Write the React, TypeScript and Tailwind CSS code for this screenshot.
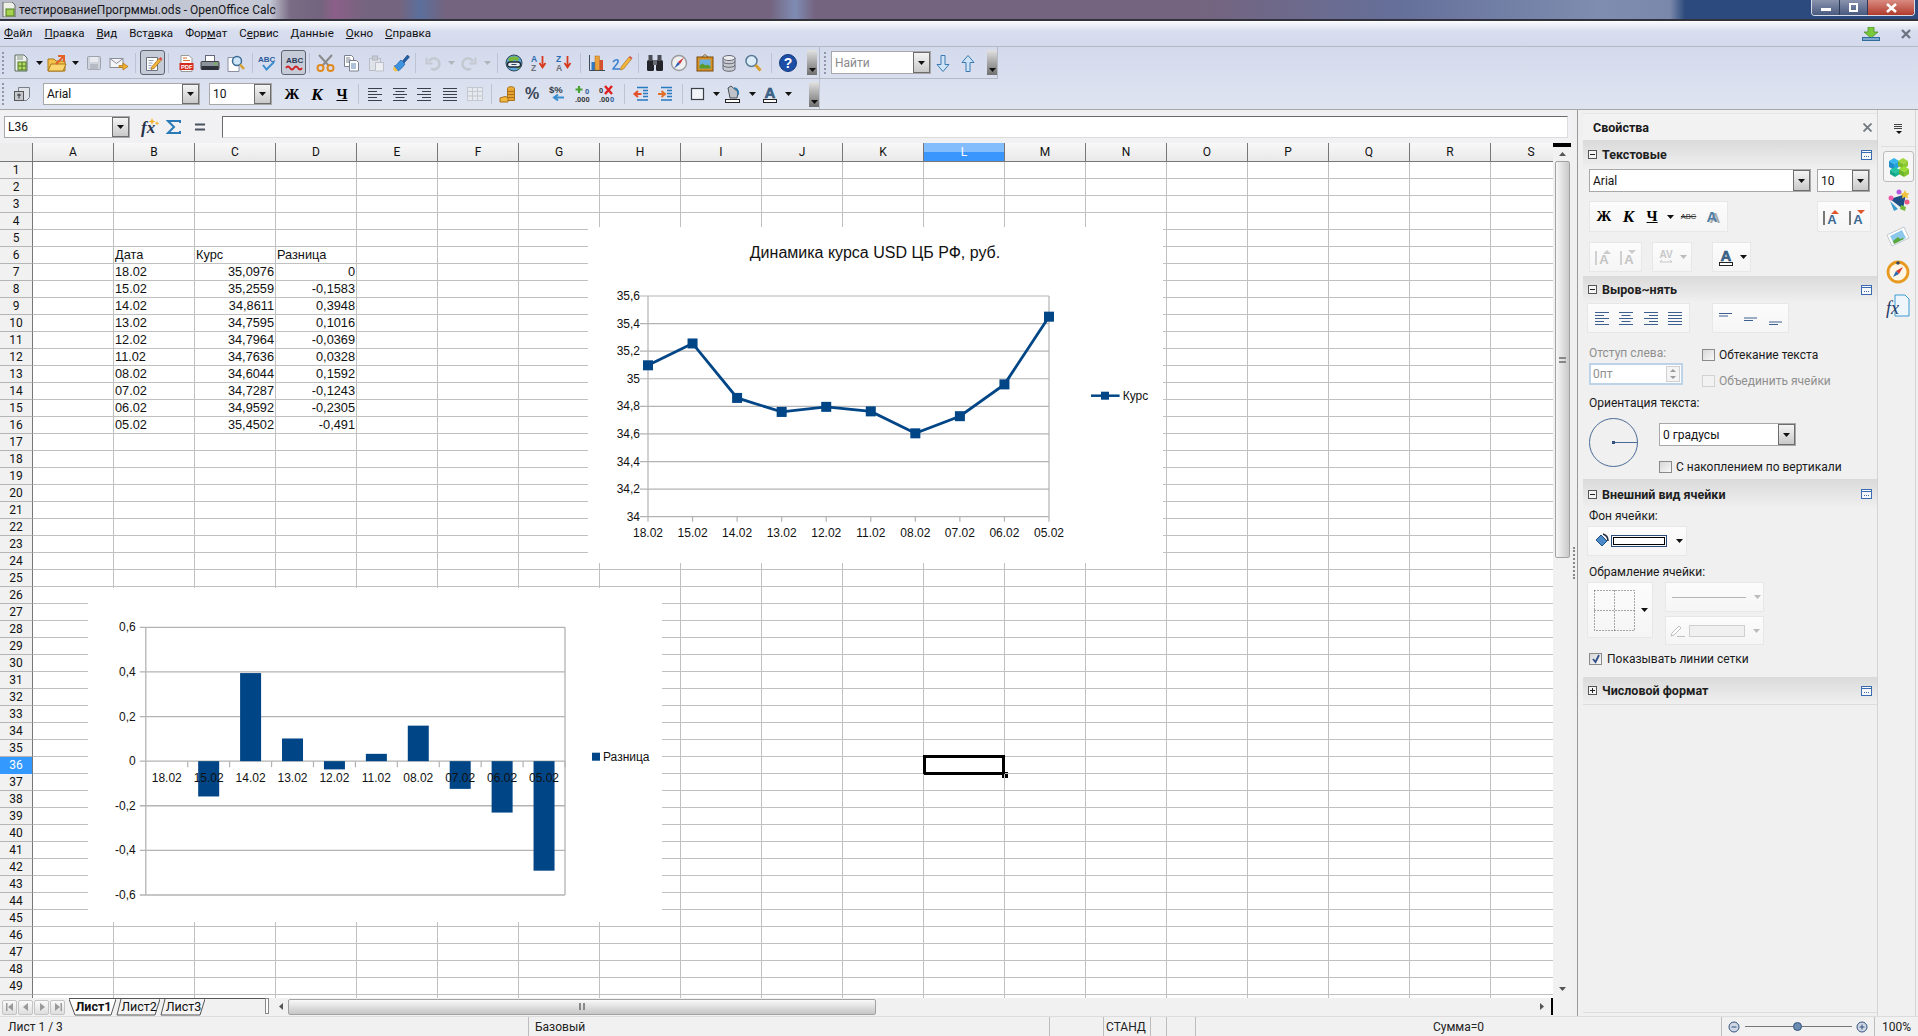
import React from "react";

const UI = "[font-family:'Roboto',sans-serif]";
const ARIAL = "[font-family:'Liberation_Sans',sans-serif]";
const SERIF = "[font-family:'Liberation_Serif',serif]";

const Svg = ({ w = 18, h = 18, children }: { w?: number; h?: number; children: React.ReactNode }) => (
  <svg width={w} height={h} viewBox={`0 0 ${w} ${h}`} className="shrink-0 overflow-visible">
    {children}
  </svg>
);

const Tri = ({ c = "#111" }: { c?: string }) => (
  <svg width="7" height="4" viewBox="0 0 7 4" className="shrink-0">
    <path d="M0 0h7L3.5 4z" fill={c} />
  </svg>
);

const Lines = ({ k, c = "#3a3f48" }: { k: "l" | "c" | "r" | "j"; c?: string }) => {
  const d = [2.5, 5.5, 8.5, 11.5, 14.5]
    .map((y, i) => {
      const short = i % 2 === 1;
      const len = k === "j" || !short ? 14 : 9;
      const x = k === "l" || k === "j" ? 2 : k === "c" ? 9 - len / 2 : 16 - len;
      return `M${x} ${y}h${len}`;
    })
    .join("");
  return (
    <Svg h={17}>
      <path d={d} stroke={c} strokeWidth="1" fill="none" />
    </Svg>
  );
};

const I: Record<string, React.ReactNode> = {
  doc: (
    <Svg>
      <path d="M3 1h9l3 3v13H3z" fill="#eef0f2" stroke="#5a6a5a" />
      <path d="M5 3h6M5 5h6" stroke="#8a9a80" />
      <rect x="6" y="8" width="8" height="8" fill="#b6d96a" stroke="#4d7a1e" />
      <path d="M10 8v8M6 12h8" stroke="#4d7a1e" />
    </Svg>
  ),
  folder: (
    <Svg w={20}>
      <path d="M1 17V5h6l2 2h9v10z" fill="#f4c24a" stroke="#a9781a" />
      <path d="M1 17l3-7h15l-3 7z" fill="#fbd66f" stroke="#a9781a" />
      <path d="M9 10l7-7M11 2h6v6" stroke="#e2622a" strokeWidth="2" fill="none" />
    </Svg>
  ),
  save: (
    <Svg>
      <rect x="2.500" y="2.500" width="13" height="13" rx="1" fill="#cfd3db" stroke="#9ea3ad" />
      <rect x="5" y="3" width="8" height="5" fill="#e8eaef" />
      <rect x="5" y="10" width="8" height="5.500" fill="#b6bac4" />
    </Svg>
  ),
  mail: (
    <Svg w={20}>
      <rect x="1" y="4.500" width="13" height="9" fill="#f4f5f8" stroke="#8a8e96" />
      <path d="M1 4.500l6.500 5 6.500-5" fill="none" stroke="#8a8e96" />
      <path d="M10 11.500h4V9l5 3.500L14 16v-2.500h-4z" fill="#f0b030" stroke="#b07010" strokeWidth=".7" />
    </Svg>
  ),
  edit: (
    <Svg>
      <path d="M2.500 3.500h11v13h-11z" fill="#fff" stroke="#6a7280" />
      <path d="M4.500 6.500h5M4.500 9h4M4.500 11.500h3M4.500 14h6" stroke="#8ea0b8" />
      <path d="M8 12.500l7-8 2 2-7 8-3 1z" fill="#f2b43a" stroke="#a06a18" strokeWidth=".7" />
      <path d="M15 4.500l1.500-1.500 2 2-1.500 1.500z" fill="#d94a4a" />
    </Svg>
  ),
  pdf: (
    <Svg>
      <path d="M4 1.500h8l3 3v13H4z" fill="#fff" stroke="#999" />
      <path d="M6 4h4M6 6.500h7" stroke="#e07030" />
      <rect x="2.500" y="9" width="14" height="7" fill="#d42a1f" />
      <text x="4" y="14.800" fontSize="5.800" fontWeight="700" fill="#fff" className={ARIAL}>PDF</text>
    </Svg>
  ),
  print: (
    <Svg w={20}>
      <rect x="5.500" y="1.500" width="9" height="7" fill="#fff" stroke="#667" />
      <rect x="1" y="7.500" width="18" height="8" rx="1" fill="#8c939c" stroke="#444" />
      <rect x="1.500" y="12" width="17" height="4" fill="#2e3238" />
      <rect x="14" y="9" width="3" height="1.500" fill="#6cc040" />
    </Svg>
  ),
  preview: (
    <Svg>
      <path d="M2 3.500h11v14H2z" fill="#fff" stroke="#8a90a0" />
      <circle cx="11" cy="7" r="4.500" fill="#cfe6f8" stroke="#3a6a96" strokeWidth="1.500" />
      <path d="M14 10.500l4 4.500" stroke="#d8a030" strokeWidth="2.500" />
    </Svg>
  ),
  spell: (
    <Svg>
      <text x="0" y="8" fontSize="8" fontWeight="700" fill="#2a5a9a" className={ARIAL}>ABC</text>
      <path d="M5 11l3.500 4.500L16 8" stroke="#3a8ed0" strokeWidth="2" fill="none" />
    </Svg>
  ),
  autospell: (
    <Svg>
      <text x="1" y="9" fontSize="8" fontWeight="700" fill="#2c3a55" className={ARIAL}>ABC</text>
      <path d="M1 14q2-3 4 0t4 0 4 0 4 0" stroke="#d02020" strokeWidth="1.800" fill="none" />
    </Svg>
  ),
  scissors: (
    <Svg w={20}>
      <path d="M3 1l10 11M16 1L6 12" stroke="#8a8a8a" strokeWidth="2" />
      <circle cx="4.500" cy="14" r="3" stroke="#e08a20" strokeWidth="2" fill="none" />
      <circle cx="14.500" cy="14" r="3" stroke="#e08a20" strokeWidth="2" fill="none" />
    </Svg>
  ),
  copy: (
    <Svg>
      <path d="M2.500 1.500h7l2 2v9h-9z" fill="#fff" stroke="#7a8290" />
      <path d="M4 4h4M4 6h5M4 8h5" stroke="#7a8290" />
      <path d="M7.500 6.500h7l2 2v8.500h-9z" fill="#fff" stroke="#7a8290" />
      <path d="M9 10h5M9 12h5M9 14h5" stroke="#5a86b8" />
    </Svg>
  ),
  paste: (
    <Svg>
      <rect x="2.500" y="4.500" width="11" height="12" fill="#dfe2e8" stroke="#b8bcc4" />
      <rect x="5.500" y="2" width="5" height="4" fill="#c8ccd4" stroke="#b0b4bc" />
      <path d="M8.500 8.500h8v8.500h-8z" fill="#eceef2" stroke="#bcc0c8" />
    </Svg>
  ),
  brush: (
    <Svg>
      <path d="M10.500 7l5-6 2 2-5.500 6z" fill="#1f5fa8" stroke="#153f70" strokeWidth=".6" />
      <path d="M2 12c3 0 4-4 7-6l4 4c-2 3-5 6-7 7z" fill="#3d93de" stroke="#1f5fa8" strokeWidth=".7" />
      <path d="M2 12l4 5-3 .500-2-2z" fill="#f4c24a" />
    </Svg>
  ),
  undo: (
    <Svg>
      <path d="M5 7.500a5.500 5.500 0 1 1 2 7" stroke="#c4c8d0" strokeWidth="2.500" fill="none" />
      <path d="M2.500 3.500v6h6" stroke="#c4c8d0" strokeWidth="2" fill="none" />
    </Svg>
  ),
  redo: (
    <Svg>
      <path d="M13 7.500a5.500 5.500 0 1 0-2 7" stroke="#c4c8d0" strokeWidth="2.500" fill="none" />
      <path d="M15.500 3.500v6h-6" stroke="#c4c8d0" strokeWidth="2" fill="none" />
    </Svg>
  ),
  nav: (
    <Svg>
      <circle cx="9" cy="9" r="8" fill="#5aa6d8" stroke="#33475a" />
      <path d="M3 5c3-3 8-3 11-1l-1 3-4-1-2 2-3-1zM12 10l4 0-1 4-3 1z" fill="#7ab83a" />
      <rect x="2.500" y="8" width="13" height="5" rx="2.500" fill="#e8eef4" stroke="#1f2a38" strokeWidth="1.300" />
      <path d="M6.500 10.500h5" stroke="#33475a" strokeWidth="1" />
    </Svg>
  ),
  az: (
    <Svg>
      <text x="1" y="8" fontSize="8.500" fontWeight="700" fill="#2a6ab0" className={ARIAL}>A</text>
      <text x="1" y="16.500" fontSize="8.500" fontWeight="700" fill="#6a7078" className={ARIAL}>Z</text>
      <path d="M12.500 2v10M9.500 9l3 4.500 3-4.500" stroke="#d83a20" strokeWidth="1.800" fill="none" />
    </Svg>
  ),
  za: (
    <Svg>
      <text x="1" y="8" fontSize="8.500" fontWeight="700" fill="#2a6ab0" className={ARIAL}>Z</text>
      <text x="1" y="16.500" fontSize="8.500" fontWeight="700" fill="#6a7078" className={ARIAL}>A</text>
      <path d="M12.500 2v10M9.500 9l3 4.500 3-4.500" stroke="#d83a20" strokeWidth="1.800" fill="none" />
    </Svg>
  ),
  chart: (
    <Svg>
      <path d="M1.500 1v15.500H17" stroke="#3a4a5a" fill="none" />
      <rect x="3.500" y="8" width="3.500" height="8" fill="#2f78c4" />
      <rect x="7" y="2" width="4.500" height="14" fill="#eca23c" stroke="#b06a10" strokeWidth=".5" />
      <rect x="11.500" y="6" width="3.500" height="10" fill="#d4502c" />
    </Svg>
  ),
  draw: (
    <Svg w={20}>
      <path d="M1 8c2-3 6-3 5 0s-5 6-5 7h7" stroke="#3a80d0" strokeWidth="1.600" fill="none" />
      <path d="M9 13l8-10 2.500 2-8 10-3 1z" fill="#f2b43a" stroke="#a06a18" strokeWidth=".6" />
      <path d="M17 3l1-1 2.500 2-1 1z" fill="#d94a4a" />
    </Svg>
  ),
  binoc: (
    <Svg>
      <rect x="1" y="6" width="7" height="11" rx="1.500" fill="#23252a" />
      <rect x="10" y="6" width="7" height="11" rx="1.500" fill="#23252a" />
      <rect x="2.500" y="1" width="4" height="6" fill="#4a4d54" />
      <rect x="11.500" y="1" width="4" height="6" fill="#4a4d54" />
      <rect x="7" y="6" width="4" height="5" fill="#6a6d74" />
    </Svg>
  ),
  compass: (
    <Svg>
      <circle cx="9" cy="9" r="7.500" fill="#eef0f2" stroke="#9a9a9a" strokeWidth="1.400" />
      <path d="M14 3.500L8 8l2 2z" fill="#d03030" />
      <path d="M4 14.500L8 8l2 2z" fill="#2a5ab0" />
    </Svg>
  ),
  pic: (
    <Svg>
      <path d="M6 3l3-2.500L12 3" stroke="#8a6a30" fill="none" />
      <rect x="1" y="3" width="16" height="14" fill="#d89020" stroke="#7a4a10" />
      <rect x="3.500" y="5.500" width="11" height="9" fill="#6cb0e0" />
      <path d="M3.500 14.500v-3l3-2 3 2 2-1 3 2v2z" fill="#5a9a2a" />
    </Svg>
  ),
  db: (
    <Svg>
      <path d="M3 4v11c0 3 12 3 12 0V4z" fill="#c8ccd0" stroke="#667" />
      <path d="M3 7.500c0 3 12 3 12 0M3 11c0 3 12 3 12 0" stroke="#667" fill="none" />
      <ellipse cx="9" cy="4" rx="6" ry="2.500" fill="#eceef0" stroke="#667" />
    </Svg>
  ),
  zoom: (
    <Svg>
      <circle cx="7.500" cy="7" r="5.500" fill="#dcecf8" stroke="#5a7a96" strokeWidth="1.500" />
      <path d="M11.500 11l5 5.500" stroke="#d8a030" strokeWidth="3" />
    </Svg>
  ),
  help: (
    <Svg>
      <circle cx="9" cy="9" r="8.500" fill="#1c4ea6" stroke="#123a80" />
      <text x="9" y="14" textAnchor="middle" fontSize="14" fontWeight="700" fill="#fff" className={ARIAL}>?</text>
    </Svg>
  ),
  down: (
    <Svg w={16}>
      <path d="M6 1.500h4v9h4l-6 7-6-7h4z" fill="#cfe4f6" stroke="#3a7ab0" />
    </Svg>
  ),
  up: (
    <Svg w={16}>
      <path d="M6 17.500h4v-9h4l-6-7-6 7h4z" fill="#cfe4f6" stroke="#3a7ab0" />
    </Svg>
  ),
  styles: (
    <Svg>
      <path d="M5.500 2.500h11v10l-3 3h-8z" fill="#dfe2e8" stroke="#7a8088" />
      <rect x="1.500" y="6.500" width="9" height="9" fill="#c4c8ce" stroke="#555" />
      <path d="M6 8.500v5M4 10h4" stroke="#333" />
    </Svg>
  ),
  merge: (
    <Svg>
      <rect x="1.500" y="2.500" width="15" height="13" fill="#e6e9ee" stroke="#c4c8d0" />
      <path d="M1.500 6.500h15M1.500 11h15M6.500 2.500v13M11.500 2.500v13" stroke="#c4c8d0" />
    </Svg>
  ),
  money: (
    <Svg>
      <ellipse cx="12" cy="3.500" rx="3.500" ry="1.800" fill="#f2b93e" stroke="#a8701a" />
      <path d="M8.500 3.500v12h7v-12" fill="#e8a22e" stroke="#a8701a" />
      <path d="M8.500 6.500h7M8.500 9.500h7M8.500 12.500h7" stroke="#a8701a" />
      <path d="M1 13l5-1.500 3 1v4.500H1z" fill="#f2b93e" stroke="#a8701a" />
    </Svg>
  ),
  pct: <span className={`${ARIAL} text-[16px] font-bold text-[#3a4656]`}>%</span>,
  curr: (
    <Svg>
      <text x="0" y="8" fontSize="9.500" fontWeight="700" fill="#333c48" className={ARIAL}>$%</text>
      <path d="M15 12.500H6M9 9.500l-4 3 4 3" stroke="#3a8ed0" strokeWidth="2" fill="none" />
    </Svg>
  ),
  addDec: (
    <Svg>
      <path d="M5 1v7M1.500 4.500h7" stroke="#4aa030" strokeWidth="2.200" />
      <text x="11" y="8.500" fontSize="7.500" fontWeight="700" fill="#2a5a9a" className={ARIAL}>0</text>
      <text x="1" y="16.500" fontSize="7.500" fontWeight="700" fill="#333" className={ARIAL}>.000</text>
    </Svg>
  ),
  delDec: (
    <Svg>
      <text x="1" y="8" fontSize="7.500" fontWeight="700" fill="#333" className={ARIAL}>0</text>
      <path d="M7 1l7 8M14 1l-7 8" stroke="#e02020" strokeWidth="2.400" />
      <text x="1" y="16.500" fontSize="7.500" fontWeight="700" fill="#333" className={ARIAL}>.00</text>
      <text x="12" y="16.500" fontSize="7.500" fontWeight="700" fill="#2a5a9a" className={ARIAL}>0</text>
    </Svg>
  ),
  indL: (
    <Svg>
      <path d="M8.500 9H2M5 6L1.500 9 5 12" stroke="#e2502a" strokeWidth="2" fill="none" />
      <path d="M4 2.500h11M10 5.500h5M10 8.500h5M10 11.500h5M4 15h11" stroke="#2a7ac0" strokeWidth="1.400" />
    </Svg>
  ),
  indR: (
    <Svg>
      <path d="M1 9h6.500M4.500 6L8 9l-3.500 3" stroke="#e2702a" strokeWidth="2" fill="none" />
      <path d="M4 2.500h11M10 5.500h5M10 8.500h5M10 11.500h5M4 15h11" stroke="#2a7ac0" strokeWidth="1.400" />
    </Svg>
  ),
  border: (
    <Svg>
      <rect x="2.500" y="3.500" width="12" height="11" fill="#f2f4f8" stroke="#3a4048" strokeWidth="1.200" />
    </Svg>
  ),
  fill: (
    <Svg>
      <path d="M4 3l3-2 7 6-1 6H6z" fill="#c0c4ca" stroke="#4a5058" />
      <path d="M10 3c3 0 5 3 4 7" stroke="#2a7ab0" strokeWidth="1.600" fill="none" />
      <rect x="1.500" y="14.500" width="14" height="3" fill="#fff" stroke="#222" />
    </Svg>
  ),
  fontColor: (
    <Svg>
      <text x="9" y="13" textAnchor="middle" fontSize="15" fontWeight="700" fill="#3d6a94" stroke="#22405e" strokeWidth=".5" className={ARIAL}>A</text>
      <rect x="2.500" y="14.500" width="13" height="3" fill="#fff" stroke="#222" />
    </Svg>
  ),
};

const Sep = ({ w }: { w: number }) => (
  <div className="flex justify-center items-center h-[24px] shrink-0" style={{ width: w }}>
    <div className="w-px h-[20px] bg-[#bcc3d4]" />
  </div>
);

const Btn = ({ w, children }: { w: number; children: React.ReactNode }) => (
  <div className="flex justify-center items-center h-[24px] shrink-0" style={{ width: w }}>
    {children}
  </div>
);

const Toggled = ({ children }: { children: React.ReactNode }) => (
  <div className="flex justify-center items-center w-[25px] h-[25px] shrink-0 rounded-[3px] border border-[#5d6470] bg-[#c6cbd8]">
    {children}
  </div>
);

const Grip = () => (
  <div className="w-[8px] shrink-0 flex justify-start pl-[2px]">
    <div className="h-[22px] border-l-2 border-dotted border-[#8f97a8]" />
  </div>
);

const Overflow = () => (
  <div className="flex items-end justify-center w-[10px] h-[25px] shrink-0 pb-[3px] bg-linear-to-b from-[#e2e2e2] to-[#707070]">
    <Tri />
  </div>
);

const ComboBtn = () => (
  <div className="flex items-center justify-center w-[17px] h-full shrink-0 border border-[#6d6d6d] bg-linear-to-b from-[#f4f4f4] to-[#c9c9c9]">
    <Tri />
  </div>
);

const Combo = ({ w, h = 23, text, grey, bc = "border-[#a8a8a8]" }: { w: number; h?: number; text: string; grey?: boolean; bc?: string }) => (
  <div className={`flex items-stretch shrink-0 border ${bc} bg-white`} style={{ width: w, height: h }}>
    <div className={`flex-1 pl-[3px] text-[12px] leading-none flex items-center ${grey ? "text-[#8a8a8a]" : "text-[#111]"}`}>{text}</div>
    <ComboBtn />
  </div>
);

const MENU: [string, string, string][] = [
  ["", "Ф", "айл"],
  ["", "П", "равка"],
  ["", "В", "ид"],
  ["Вст", "а", "вка"],
  ["Фор", "м", "ат"],
  ["С", "е", "рвис"],
  ["", "Д", "анные"],
  ["", "О", "кно"],
  ["", "С", "правка"],
];

function TitleBar() {
  return (
    <div className="flex items-center h-[19px] shrink-0 bg-[linear-gradient(90deg,#b9bdcb_0px,#c6cad6_240px,#c3c6d3_270px,#7a6c85_290px,#74647f_320px,#8c5f88_335px,#74647f_365px,#74647f_400px,#5a6f9c_420px,#74647f_445px,#74647f_770px,#7f8cb4_795px,#74647f_815px,#74647f_1200px,#65709a_1400px,#7f8db0_1600px,#7a88ab_1670px,#2c4a7d_1685px,#2c4a7d_1918px)]">
      <div className="flex items-center justify-center w-[17px]">
        <svg width="14" height="15" viewBox="0 0 14 15">
          <path d="M1 0h9l3 3v12H1z" fill="#eef0e8" stroke="#666" />
          <rect x="4" y="7" width="8" height="7" fill="#a6d050" stroke="#4a7a1a" />
        </svg>
      </div>
      <span className="pl-[2px] text-[12px] text-[#16161a] whitespace-nowrap leading-none">тестированиеПрогрммы.ods - OpenOffice Calc</span>
      <div className="ml-auto mr-[3px] flex h-[16px] self-start rounded-b-[4px] border border-t-0 border-[#d8dce8] overflow-hidden">
        <div className="w-[28px] flex items-center justify-center bg-linear-to-b from-[#8a93ad] to-[#4a5a80] border-r border-[#2c3a5a]">
          <div className="w-[10px] h-[3px] mt-[4px] bg-white" />
        </div>
        <div className="w-[28px] flex items-center justify-center bg-linear-to-b from-[#8a93ad] to-[#4a5a80] border-r border-[#2c3a5a]">
          <div className="w-[9px] h-[9px] border-2 border-white" />
        </div>
        <div className="w-[46px] flex items-center justify-center bg-linear-to-b from-[#d98a80] to-[#b03a2c]">
          <svg width="13" height="10" viewBox="0 0 13 10"><path d="M2 1l9 8M11 1L2 9" stroke="#fff" strokeWidth="2.600" /></svg>
        </div>
      </div>
    </div>
  );
}

function MenuBar() {
  return (
    <div className="flex items-center h-[28px] shrink-0 pl-[4px] border-t-2 border-[#32323c] border-b border-b-[#b4b9c6] bg-linear-to-b from-[#fbfcfd] via-[#d8deee] via-40% to-[#d3daec]">
      <div className="flex gap-[12px] text-[11.500px] text-[#111] leading-none">
        {MENU.map(([a, b, c], i) => (
          <span key={i} className="whitespace-nowrap">
            {a}
            <span className="underline">{b}</span>
            {c}
          </span>
        ))}
      </div>
      <div className="ml-auto flex items-center">
        <svg width="18" height="14" viewBox="0 0 18 14" className="mr-[21px]">
          <path d="M6 0h6v5h4l-7 6-7-6h4z" fill="#7ac83c" stroke="#3f8a1c" strokeWidth=".7" />
          <rect x="0.500" y="10.500" width="17" height="3" fill="#7aa8d0" stroke="#2f6a9a" />
        </svg>
        <svg width="10" height="10" viewBox="0 0 10 10" className="mr-[7px]">
          <path d="M1 1l8 8M9 1L1 9" stroke="#6a7280" strokeWidth="2.200" />
        </svg>
      </div>
    </div>
  );
}

function Toolbars() {
  return (
    <div className="flex flex-col shrink-0 h-[62px] bg-linear-to-b from-[#d3daec] to-[#dfe4f1]">
      <div className="flex h-[32px] items-center">
        <div className="flex items-center w-[820px] h-full border-b border-[#b4b9c6] border-r">
          <Grip />
          <Btn w={26}>{I.doc}</Btn>
          <Btn w={10}><Tri /></Btn>
          <Btn w={26}>{I.folder}</Btn>
          <Btn w={10}><Tri /></Btn>
          <Btn w={28}>{I.save}</Btn>
          <Btn w={22}>{I.mail}</Btn>
          <Sep w={10} />
          <Toggled>{I.edit}</Toggled>
          <Sep w={6} />
          <Btn w={30}>{I.pdf}</Btn>
          <Btn w={18}>{I.print}</Btn>
          <Btn w={32}>{I.preview}</Btn>
          <Sep w={2} />
          <Btn w={28}>{I.spell}</Btn>
          <Toggled>{I.autospell}</Toggled>
          <Sep w={6} />
          <Btn w={28}>{I.scissors}</Btn>
          <Btn w={22}>{I.copy}</Btn>
          <Btn w={28}>{I.paste}</Btn>
          <Btn w={22}>{I.brush}</Btn>
          <Sep w={6} />
          <Btn w={30}>{I.undo}</Btn>
          <Btn w={6}><Tri c="#b0b4bc" /></Btn>
          <Btn w={30}>{I.redo}</Btn>
          <Btn w={6}><Tri c="#b0b4bc" /></Btn>
          <Sep w={14} />
          <Btn w={20}>{I.nav}</Btn>
          <Btn w={30}>{I.az}</Btn>
          <Btn w={20}>{I.za}</Btn>
          <Sep w={12} />
          <Btn w={22}>{I.chart}</Btn>
          <Btn w={28}>{I.draw}</Btn>
          <Sep w={4} />
          <Btn w={30}>{I.binoc}</Btn>
          <Btn w={18}>{I.compass}</Btn>
          <Btn w={34}>{I.pic}</Btn>
          <Btn w={14}>{I.db}</Btn>
          <Btn w={34}>{I.zoom}</Btn>
          <Sep w={2} />
          <Btn w={32}>{I.help}</Btn>
          <div className="w-[3px]" />
          <Overflow />
        </div>
        <div className="flex items-center w-[178px] h-full pl-[2px] border-b border-r border-[#b4b9c6]">
          <Grip />
          <div className="w-px" />
          <Combo w={100} text="Найти" grey />
          <Btn w={24}>{I.down}</Btn>
          <Btn w={26}>{I.up}</Btn>
          <div className="w-[7px]" />
          <Overflow />
        </div>
      </div>
      <div className="flex h-[30px] items-center">
        <div className="flex items-center w-[820px] h-full border-r border-[#c0c5d2]">
          <Grip />
          <Btn w={28}>{I.styles}</Btn>
          <div className="w-[7px]" />
          <Combo w={157} h={22} text="Arial" />
          <div className="w-[9px]" />
          <Combo w={63} h={22} text="10" />
          <div className="w-[7.5px]" />
          <Btn w={25}><span className={`${SERIF} font-bold text-[15px] text-black leading-none`}>Ж</span></Btn>
          <Btn w={25}><span className={`${SERIF} font-bold italic text-[17px] text-black leading-none`}>К</span></Btn>
          <Btn w={25}><span className={`${SERIF} font-bold text-[15px] text-black leading-none underline`}>Ч</span></Btn>
          <Sep w={7} />
          <Btn w={27}><Lines k="l" /></Btn>
          <Btn w={23}><Lines k="c" /></Btn>
          <Btn w={25}><Lines k="r" /></Btn>
          <Btn w={27}><Lines k="j" /></Btn>
          <Btn w={23}>{I.merge}</Btn>
          <Sep w={9} />
          <Btn w={25}>{I.money}</Btn>
          <Btn w={23}>{I.pct}</Btn>
          <Btn w={29}>{I.curr}</Btn>
          <Btn w={21}>{I.addDec}</Btn>
          <Btn w={27}>{I.delDec}</Btn>
          <Sep w={7} />
          <Btn w={29}>{I.indL}</Btn>
          <Btn w={19}>{I.indR}</Btn>
          <Sep w={13} />
          <Btn w={19}>{I.border}</Btn>
          <Btn w={17}><Tri /></Btn>
          <Btn w={17}>{I.fill}</Btn>
          <Btn w={21}><Tri /></Btn>
          <Btn w={15}>{I.fontColor}</Btn>
          <Btn w={21}><Tri /></Btn>
          <div className="w-[10.500px]" />
          <Overflow />
        </div>
      </div>
    </div>
  );
}

function FormulaBar() {
  return (
    <div className="flex items-center h-[33px] shrink-0 pl-[4px] pr-[3px] bg-[#f1f1f3]">
      <div className="flex items-stretch w-[126px] h-[22px] shrink-0 border border-[#a8a8a8] bg-white">
        <div className="flex-1 pl-[3px] text-[12px] text-[#111] flex items-center leading-none">L36</div>
        <ComboBtn />
      </div>
      <div className="w-[20px] flex justify-center ml-[10px] shrink-0">
        <svg width="20" height="20" viewBox="0 0 20 20">
          <text x="1" y="16" fontSize="17" fontStyle="italic" fontWeight="700" fill="#26324a" className={SERIF}>fx</text>
          <path d="M12 1l1 2.500 2.500 1-2.500 1-1 2.500-1-2.500-2.500-1 2.500-1zM17 4l.7 1.500 1.500.7-1.500.7-.7 1.500-.7-1.500-1.500-.7 1.500-.7z" fill="#efb431" />
        </svg>
      </div>
      <div className="w-[20px] flex justify-center ml-[4px] shrink-0">
        <svg width="16" height="16" viewBox="0 0 16 16">
          <path d="M14 4V2H2l6 6-6 6h12v-2" fill="none" stroke="#2a7ab8" strokeWidth="2" />
        </svg>
      </div>
      <div className="w-[20px] flex justify-center ml-[6px] shrink-0">
        <svg width="12" height="10" viewBox="0 0 12 10">
          <path d="M1 2.500h10M1 7.500h10" stroke="#4a5262" strokeWidth="2" />
        </svg>
      </div>
      <div className="flex-1 h-[22px] ml-[12px] border border-[#dcdcdc] border-t-[#6a6a6a] border-l-[#6a6a6a] bg-white" />
    </div>
  );
}

const COLS = "ABCDEFGHIJKLMNOPQRS".split("");
const DATA: Record<number, [string, string, string]> = {
  6: ["Дата", "Курс", "Разница"],
  7: ["18.02", "35,0976", "0"],
  8: ["15.02", "35,2559", "-0,1583"],
  9: ["14.02", "34,8611", "0,3948"],
  10: ["13.02", "34,7595", "0,1016"],
  11: ["12.02", "34,7964", "-0,0369"],
  12: ["11.02", "34,7636", "0,0328"],
  13: ["08.02", "34,6044", "0,1592"],
  14: ["07.02", "34,7287", "-0,1243"],
  15: ["06.02", "34,9592", "-0,2305"],
  16: ["05.02", "35,4502", "-0,491"],
};

function SheetRow({ n }: { n: number }) {
  const d = DATA[n];
  const active = n === 36;
  return (
    <div className="flex h-[17px] shrink-0">
      <div className={`w-[33px] shrink-0 flex items-center justify-center text-[12px] leading-none border-r border-b border-r-[#777] ${active ? "bg-[#3399ff] text-white border-b-[#3399ff]" : "bg-[#f1f1f1] text-[#111] border-b-[#b5b5b5]"}`}>
        {n < 50 ? n : ""}
      </div>
      {COLS.map((c, i) => {
        const val = d && i >= 1 && i <= 3 ? d[i - 1] : "";
        const right = n > 6 && (i === 2 || i === 3);
        return (
          <div
            key={c}
            className={`relative w-[81px] shrink-0 border-r border-b border-[#c0c0c0] ${ARIAL} text-[12.750px] leading-[16px] text-[#111] whitespace-nowrap ${right ? "text-right pr-[1px]" : "pl-[1px]"}`}
          >
            {val}
            {active && c === "L" && (
              <div className="absolute left-[-1px] top-[-2px] w-[82px] h-[20px] border-[3px] border-black">
                <div className="absolute right-[-6px] bottom-[-6px] w-[6px] h-[6px] bg-black" />
              </div>
            )}
          </div>
        );
      })}
    </div>
  );
}

const LINE = [35.0976, 35.2559, 34.8611, 34.7595, 34.7964, 34.7636, 34.6044, 34.7287, 34.9592, 35.4502];
const DIFF = [0, -0.1583, 0.3948, 0.1016, -0.0369, 0.0328, 0.1592, -0.1243, -0.2305, -0.491];
const DATES = ["18.02", "15.02", "14.02", "13.02", "12.02", "11.02", "08.02", "07.02", "06.02", "05.02"];

function LineChart() {
  const x0 = 60;
  const x1 = 461;
  const y0 = 69;
  const y1 = 289.7;
  const step = (x1 - x0) / 9;
  const ly = (v: number) => y1 - ((v - 34) / 1.6) * (y1 - y0);
  const ticks = ["35,6", "35,4", "35,2", "35", "34,8", "34,6", "34,4", "34,2", "34"];
  const pts = LINE.map((v, i) => [x0 + i * step, ly(v)] as const);
  return (
    <div className="absolute left-[588px] top-[84px] w-[575px] h-[336px] bg-white">
      <svg width="575" height="336" viewBox="0 0 575 336" className={`${ARIAL} block`}>
        <text x="287" y="31" textAnchor="middle" fontSize="16" fill="#111">Динамика курса USD ЦБ РФ, руб.</text>
        {ticks.map((t, i) => {
          const y = y0 + (i * (y1 - y0)) / 8;
          return (
            <g key={t}>
              <path d={`M${x0 - 8} ${y}H${x1}`} stroke="#b3b3b3" strokeWidth="1.200" />
              <text x={x0 - 8} y={y + 4} textAnchor="end" fontSize="12" fill="#111">{t}</text>
            </g>
          );
        })}
        <path d={`M${x0} ${y0}V${y1}M${x1} ${y0}V${y1}`} stroke="#b3b3b3" strokeWidth="1.200" fill="none" />
        {DATES.map((d, i) => (
          <g key={d}>
            <path d={`M${x0 + i * step} ${y1}v5`} stroke="#b3b3b3" strokeWidth="1.200" />
            <text x={x0 + i * step} y={y1 + 20} textAnchor="middle" fontSize="12" fill="#111">{d}</text>
          </g>
        ))}
        <path d={`M${pts.map((p) => `${p[0]} ${p[1]}`).join("L")}`} stroke="#004586" strokeWidth="2.800" fill="none" />
        {pts.map((p, i) => (
          <rect key={i} x={p[0] - 5} y={p[1] - 5} width="10" height="10" fill="#004586" />
        ))}
        <path d="M503 168.700h28.600" stroke="#004586" strokeWidth="2.500" />
        <rect x="513" y="164.700" width="8" height="8" fill="#004586" />
        <text x="534.700" y="173" fontSize="12" fill="#111">Курс</text>
      </svg>
    </div>
  );
}

function BarChart() {
  const x0 = 57.8;
  const x1 = 477;
  const y0 = 39.3;
  const y1 = 307;
  const step = (x1 - x0) / 10;
  const zero = y0 + (y1 - y0) / 2;
  const unit = (y1 - y0) / 1.2;
  const ticks = ["0,6", "0,4", "0,2", "0", "-0,2", "-0,4", "-0,6"];
  return (
    <div className="absolute left-[88px] top-[445px] w-[574px] h-[334px] bg-white">
      <svg width="574" height="334" viewBox="0 0 574 334" className={`${ARIAL} block`}>
        {ticks.map((t, i) => {
          const y = y0 + (i * (y1 - y0)) / 6;
          return (
            <g key={t}>
              <path d={`M${x0 - 6} ${y}H${x1}`} stroke="#b3b3b3" strokeWidth="1.300" />
              <text x={x0 - 10} y={y + 4} textAnchor="end" fontSize="12" fill="#111">{t}</text>
            </g>
          );
        })}
        <path d={`M${x0} ${y0}V${y1}M${x1} ${y0}V${y1}`} stroke="#b3b3b3" strokeWidth="1.300" fill="none" />
        {DATES.map((_, i) => (
          <path key={i} d={`M${x0 + (i + 1) * step} ${zero}v6`} stroke="#b3b3b3" strokeWidth="1.200" />
        ))}
        {DIFF.map((v, i) => {
          const h = Math.abs(v) * unit;
          const y = v >= 0 ? zero - h : zero;
          return <rect key={i} x={x0 + (i + 0.5) * step - 10.500} y={y} width="21" height={h} fill="#004586" />;
        })}
        {DATES.map((d, i) => (
          <text key={d} x={x0 + (i + 0.5) * step} y={zero + 21} textAnchor="middle" fontSize="12" fill="#111">{d}</text>
        ))}
        <rect x="504" y="164.700" width="8" height="8" fill="#004586" />
        <text x="515" y="173" fontSize="12" fill="#111">Разница</text>
      </svg>
    </div>
  );
}

function Sheet() {
  return (
    <div className="relative flex-1 min-w-0 overflow-hidden bg-white">
      <div className="flex h-[19px] shrink-0">
        <div className="w-[33px] shrink-0 border-r border-b border-[#777] bg-[#ededed]" />
        {COLS.map((c) =>
          c === "L" ? (
            <div key={c} className="relative w-[81px] shrink-0 border-r border-b border-[#777] bg-[linear-gradient(180deg,#84bdfb_0%,#84bdfb_50%,#3a96fc_50%,#3a96fc_100%)] flex items-center justify-center text-[12px] leading-none text-white">
              {c}
            </div>
          ) : (
            <div key={c} className="w-[81px] shrink-0 border-r border-b border-[#777] bg-linear-to-b from-[#f8f8f8] to-[#e9e9e9] flex items-center justify-center text-[12px] leading-none text-[#111]">
              {c}
            </div>
          )
        )}
      </div>
      {Array.from({ length: 50 }, (_, i) => (
        <SheetRow key={i} n={i + 1} />
      ))}
      <LineChart />
      <BarChart />
    </div>
  );
}

function VScroll() {
  return (
    <div className="flex flex-col items-center w-[18px] shrink-0 bg-[#f1f1f1]">
      <div className="w-full h-[4px] bg-black shrink-0" />
      <div className="h-[14px] flex items-center justify-center shrink-0">
        <svg width="7" height="4" viewBox="0 0 7 4"><path d="M3.500 0L7 4H0z" fill="#555" /></svg>
      </div>
      <div className="relative w-[15px] h-[397px] shrink-0 rounded-[2px] border border-[#a2a2a2] bg-linear-to-r from-[#f7f7f7] to-[#c9c9c9] flex items-center justify-center">
        <div className="w-[7px] h-[6px] border-y-2 border-[#888]" />
      </div>
      <div className="flex-1" />
      <div className="h-[14px] mb-[2px] flex items-center justify-center shrink-0">
        <Tri c="#555" />
      </div>
    </div>
  );
}

const Tab = ({ w, label, active }: { w: number; label: string; active?: boolean }) => (
  <div className="relative flex items-center justify-center h-[17px] shrink-0" style={{ width: w }}>
    <svg width={w} height="17" viewBox={`0 0 ${w} 17`} className="absolute left-0 top-0">
      <path d={`M${active ? 0 : 5} 0L${active ? 6 : 1} 16H${w - 5}L${w} 0`} fill={active ? "#fff" : "#f4f4f4"} stroke="#555" />
    </svg>
    <span className={`relative ml-[2px] text-[12.500px] leading-none text-[#111] ${active ? "font-bold" : ""}`}>{label}</span>
  </div>
);

const NavBtn = ({ d }: { d: string }) => (
  <div className="flex items-center justify-center w-[15px] h-[15px] shrink-0 rounded-[2px] border border-[#c4c4c4] bg-linear-to-b from-[#fafafa] to-[#dedede]">
    <svg width="8" height="8" viewBox="0 0 8 8"><path d={d} fill="#9a9a9a" /></svg>
  </div>
);

function Tabs() {
  return (
    <div className="flex items-start h-[18px] shrink-0 bg-[#f1f1f1]">
      <div className="flex items-center w-[69px] h-[18px] shrink-0 pl-[2px] gap-px">
        <NavBtn d="M0 0h1.500v8H0zM7 0v8L2 4z" />
        <NavBtn d="M6 0v8L1 4z" />
        <NavBtn d="M2 0v8l5-4z" />
        <NavBtn d="M1 0v8l5-4zM6.500 0H8v8H6.500z" />
      </div>
      <div className="flex items-start w-[196px] h-[18px] shrink-0 border-t border-[#555]">
        <Tab w={47} label="Лист1" active />
        <Tab w={44} label="Лист2" />
        <Tab w={45} label="Лист3" />
      </div>
      <div className="w-[4px] h-[16px] shrink-0 border border-[#888] bg-white" />
      <div className="w-[3px]" />
      <div className="flex items-center flex-1 h-[17px] relative">
        <div className="w-[15px] flex justify-center shrink-0 ml-[1px]">
          <svg width="4" height="7" viewBox="0 0 4 7"><path d="M4 0v7L0 3.500z" fill="#555" /></svg>
        </div>
        <div className="w-[588px] h-[16px] shrink-0 rounded-[2px] border border-[#a2a2a2] bg-linear-to-b from-[#f9f9f9] to-[#c6c6c6] flex items-center justify-center">
          <div className="w-[6px] h-[7px] border-x-2 border-[#888]" />
        </div>
        <div className="flex-1" />
        <div className="w-[8px] flex justify-center shrink-0">
          <svg width="4" height="7" viewBox="0 0 4 7"><path d="M0 0v7l4-3.500z" fill="#555" /></svg>
        </div>
        <div className="w-[5px]" />
        <div className="w-[2px] h-[17px] shrink-0 bg-black" />
        <div className="w-[18px] shrink-0" />
      </div>
    </div>
  );
}

const Group = ({ className = "", children }: { className?: string; children?: React.ReactNode }) => (
  <div className={`flex items-center shrink-0 border border-[#e7e7e7] bg-linear-to-b from-[#fcfcfc] to-[#f5f5f5] ${className}`}>
    {children}
  </div>
);

const Head = ({ title, plus, h = 27 }: { title: string; plus?: boolean; h?: number }) => (
  <div className="flex items-center shrink-0 pl-[5px] pr-[5px] bg-linear-to-b from-[#dadada] to-[#f0f0f0]" style={{ height: h }}>
    <svg width="9" height="9" viewBox="0 0 9 9" className="shrink-0">
      <rect x=".5" y=".5" width="8" height="8" fill="#f4f4f4" stroke="#555" />
      <path d={plus ? "M2 4.500h5M4.500 2v5" : "M2 4.500h5"} stroke="#222" />
    </svg>
    <span className="ml-[5px] pt-[2px] text-[12.500px] font-bold text-[#1e1e1e] leading-none">{title}</span>
    <svg width="11" height="10" viewBox="0 0 11 10" className="ml-auto shrink-0">
      <rect x=".5" y=".5" width="10" height="9" fill="#f6f8fb" stroke="#3a6ab0" />
      <path d="M.5 2.500h10" stroke="#3a6ab0" />
      <path d="M3 6.500h1M5 6.500h1M7 6.500h1" stroke="#3a6ab0" />
    </svg>
  </div>
);

const Check = ({ on, off }: { on?: boolean; off?: boolean }) => (
  <div className={`flex items-center justify-center w-[13px] h-[12px] shrink-0 border ${off ? "border-[#d2d2d2] bg-[#f2f2f2]" : "border-[#8a8a8a] bg-linear-to-br from-[#d8d8d8] to-[#f8f8f8]"}`}>
    {on && (
      <svg width="10" height="10" viewBox="0 0 10 10"><path d="M2 5l2.500 3L8 1" stroke="#2f4f88" strokeWidth="1.800" fill="none" /></svg>
    )}
  </div>
);

const SideTxt = ({ children, grey, className = "" }: { children: React.ReactNode; grey?: boolean; className?: string }) => (
  <span className={`text-[12px] leading-none whitespace-nowrap ${grey ? "text-[#8f8f8f]" : "text-[#1a1a1a]"} ${className}`}>{children}</span>
);

const SmallA = ({ up, off }: { up?: boolean; off?: boolean }) => (
  <Svg w={18} h={18}>
    <text x="10" y="16" textAnchor="middle" fontSize="13" fontWeight="700" fill={off ? "#c4c4c4" : "#3a6a94"} className={ARIAL}>A</text>
    <path d="M2 3v14" stroke={off ? "#d0d0d0" : "#777"} strokeWidth="2" />
    <path d={up ? "M9 6l4-4 4 4z" : "M9 2l4 4 4-4z"} fill={off ? "#ccc" : "#e0552a"} />
  </Svg>
);

function Sidebar() {
  return (
    <div className="flex w-[340px] shrink-0 border-l border-[#9a9a9a] bg-[#f0f0f0] pl-[5px] pr-[1px]">
      <div className="flex flex-col w-[294px] shrink-0 pt-[3px] mb-[3px] border-b border-[#dcdcdc]">
        <div className="flex items-center h-[27px] shrink-0 pl-[10px] pr-[4px] bg-[#f2f2f2] border-t border-[#e6e6e6]">
          <span className="pt-[2px] text-[12.500px] font-bold text-[#1a1a1a] leading-none">Свойства</span>
          <svg width="9" height="9" viewBox="0 0 9 9" className="ml-auto mr-[1px]">
            <path d="M.5.5l8 8M8.500.5l-8 8" stroke="#707880" strokeWidth="1.800" />
          </svg>
        </div>

        {/* Text */}
        <div className="flex flex-col h-[136px] shrink-0">
          <Head title="Текстовые" h={29} />
          <div className="flex pl-[6px] gap-[6px]">
            <Combo w={222} text="Arial" />
            <Combo w={53} text="10" />
          </div>
          <div className="flex justify-between pl-[6px] pr-[6px] mt-[9px]">
            <Group className="w-[139px] h-[31px]">
              <div className="w-[26px] ml-[1px] flex justify-center"><span className={`${SERIF} font-bold text-[15px] leading-none text-black`}>Ж</span></div>
              <div className="w-[24px] flex justify-center"><span className={`${SERIF} font-bold italic text-[17px] leading-none text-black`}>К</span></div>
              <div className="w-[24px] flex justify-center"><span className={`${SERIF} font-bold underline text-[15px] leading-none text-black`}>Ч</span></div>
              <div className="w-[14px] flex justify-center"><Tri /></div>
              <div className="w-[22px] flex justify-center"><span className={`${ARIAL} line-through text-[7.500px] leading-none text-[#333]`}>ABC</span></div>
              <div className="w-[28px] flex justify-center">
                <Svg w={18}>
                  <text x="11" y="15" textAnchor="middle" fontSize="15" fontWeight="700" fill="#a8a8a8" className={ARIAL}>A</text>
                  <text x="8" y="14" textAnchor="middle" fontSize="15" fontWeight="700" fill="#4c7fa8" className={ARIAL}>A</text>
                </Svg>
              </div>
            </Group>
            <Group className="w-[54px] h-[31px] justify-around">
              <SmallA up />
              <SmallA />
            </Group>
          </div>
          <div className="flex pl-[6px] mt-[10px]">
            <Group className="w-[53px] h-[30px] justify-around">
              <SmallA up off />
              <SmallA off />
            </Group>
            <Group className="w-[40px] h-[30px] ml-[10px] justify-center gap-[6px]">
              <Svg w={16}>
                <text x="8" y="10" textAnchor="middle" fontSize="10" fontWeight="700" fill="#c8c8c8" className={ARIAL}>AV</text>
                <path d="M2 14h12M2 14l2-2M14 14l-2-2" stroke="#c8c8c8" fill="none" />
              </Svg>
              <Tri c="#bbb" />
            </Group>
            <Group className="w-[39px] h-[30px] ml-[20px] justify-center gap-[5px]">
              {I.fontColor}
              <Tri />
            </Group>
          </div>
        </div>

        {/* Align */}
        <div className="flex flex-col h-[203px] shrink-0">
          <Head title="Выров~нять" />
          <div className="flex pl-[4px]">
            <Group className="w-[103px] h-[30px] justify-around px-[2px]">
              <Lines k="l" c="#3d5f90" />
              <Lines k="c" c="#3d5f90" />
              <Lines k="r" c="#3d5f90" />
              <Lines k="j" c="#3d5f90" />
            </Group>
            <Group className="w-[77px] h-[30px] ml-[22px] justify-around">
              <Svg h={17}><path d="M2 3.500h13M2 6h9" stroke="#3d5f90" /></Svg>
              <Svg h={17}><path d="M2 8h13M2 10.500h9" stroke="#3d5f90" /></Svg>
              <Svg h={17}><path d="M2 12h13M2 14.500h9" stroke="#3d5f90" /></Svg>
            </Group>
          </div>
          <div className="flex pl-[6px] mt-[12px]">
            <div className="flex flex-col w-[113px] shrink-0">
              <SideTxt grey className="h-[15px] flex items-center">Отступ слева:</SideTxt>
              <div className="flex items-stretch w-[94px] h-[22px] mt-[3px] border-2 border-[#bcd3ea] bg-white">
                <span className="flex-1 pl-[2px] text-[12px] leading-none text-[#8f8f8f] flex items-center">0пт</span>
                <div className="flex flex-col w-[14px] my-[1px] mr-[1px] border border-[#d0d0d0] bg-[#f4f4f4] items-center justify-around">
                  <svg width="6" height="3" viewBox="0 0 6 3"><path d="M3 0l3 3H0z" fill="#9a9a9a" /></svg>
                  <svg width="6" height="3" viewBox="0 0 6 3"><path d="M0 0h6L3 3z" fill="#9a9a9a" /></svg>
                </div>
              </div>
            </div>
            <div className="flex flex-col mt-[3px]">
              <div className="flex items-center gap-[4px] h-[14px]">
                <Check />
                <SideTxt>Обтекание текста</SideTxt>
              </div>
              <div className="flex items-center gap-[4px] h-[14px] mt-[12px]">
                <Check off />
                <SideTxt grey>Объединить ячейки</SideTxt>
              </div>
            </div>
          </div>
          <SideTxt className="h-[16px] mt-[7px] ml-[6px] flex items-center">Ориентация текста:</SideTxt>
          <div className="flex pl-[6px] mt-[7px]">
            <svg width="49" height="49" viewBox="0 0 49 49" className="shrink-0">
              <circle cx="24.500" cy="24.500" r="24" fill="none" stroke="#4a6a96" />
              <path d="M24.500 24.500H48.500" stroke="#4a6a96" />
              <rect x="23" y="23" width="3" height="3" fill="#34527e" />
            </svg>
            <div className="flex flex-col ml-[21px] mt-[5px]">
              <Combo w={137} text="0 градусы" />
              <div className="flex items-center gap-[4px] mt-[15px]">
                <Check />
                <SideTxt>С накоплением по вертикали</SideTxt>
              </div>
            </div>
          </div>
        </div>

        {/* Cell appearance */}
        <div className="flex flex-col h-[198px] shrink-0">
          <Head title="Внешний вид ячейки" h={30} />
          <SideTxt className="h-[14px] ml-[6px] flex items-center">Фон ячейки:</SideTxt>
          <Group className="w-[100px] h-[30px] ml-[4px] mt-[3px] px-[6px] gap-[1px]">
            <svg width="16" height="16" viewBox="0 0 16 16" className="shrink-0">
              <path d="M7 2l6 6-5 5-6-6z" fill="#4a8ac8" stroke="#22507e" />
              <path d="M9 1c3 1 5 3 5 7" stroke="#1f2a38" strokeWidth="1.600" fill="none" />
            </svg>
            <div className="w-[56px] h-[12px] shrink-0 border border-[#2a4a78] p-px">
              <div className="w-full h-full border border-black bg-white" />
            </div>
            <div className="ml-[8px]"><Tri /></div>
          </Group>
          <SideTxt className="h-[16px] mt-[8px] ml-[6px] flex items-center">Обрамление ячейки:</SideTxt>
          <div className="flex pl-[4px] mt-[2px] h-[63px]">
            <Group className="w-[66px] h-[56px] pl-[6px]">
              <svg width="41" height="41" viewBox="0 0 41 41" className="shrink-0">
                <path d="M.5.5h40v40H.500zM20.500.5v40M.5 20.500h40" fill="none" stroke="#555" strokeDasharray="1 2" />
              </svg>
              <div className="ml-[6px]"><Tri /></div>
            </Group>
            <div className="flex flex-col ml-[12px] gap-[4px]">
              <Group className="w-[99px] h-[30px] pl-[6px]">
                <div className="w-[74px] h-px bg-[#b4b4b4]" />
                <div className="ml-[8px]"><Tri c="#bbb" /></div>
              </Group>
              <Group className="w-[99px] h-[29px] pl-[4px]">
                <svg width="16" height="14" viewBox="0 0 16 14" className="shrink-0">
                  <path d="M2 9l7-7 2 2-7 7-3 1z" fill="#fff" stroke="#c0c0c0" />
                  <path d="M7 12.500h8" stroke="#c0c0c0" />
                </svg>
                <div className="w-[56px] h-[12px] ml-[3px] shrink-0 border border-[#cfcfcf] bg-[#f0f0f0]" />
                <div className="ml-[8px]"><Tri c="#bbb" /></div>
              </Group>
            </div>
          </div>
          <div className="flex items-center gap-[5px] ml-[6px] mt-[7px] h-[13px]">
            <Check on />
            <SideTxt>Показывать линии сетки</SideTxt>
          </div>
        </div>

        <div className="border-b border-[#dcdcdc]">
          <Head title="Числовой формат" plus />
        </div>
      </div>

      <div className="flex flex-col items-center flex-1 pl-[3px] border-l border-r border-[#d4d4d4]">
        <div className="h-[37px] w-full flex items-center justify-center border-b border-[#dedede] shrink-0">
          <svg width="11" height="11" viewBox="0 0 11 11">
            <path d="M1 1.500h8M1 3.500h8M1 5.500h8" stroke="#444" />
            <path d="M3 8h6L6 11z" fill="#111" />
          </svg>
        </div>
        <div className="flex items-center justify-center w-[31px] h-[31px] mt-[4px] shrink-0 rounded-[3px] border border-[#bcbcbc] bg-[#f6f6f6]">
          <svg width="23" height="23" viewBox="0 0 23 23">
            <path d="M2 6l5-3 5 3-5 3z" fill="#35b6ee" /><path d="M2 6v6l5 3V9z" fill="#1d8ecb" /><path d="M12 6v6l-5 3V9z" fill="#24a3de" />
            <path d="M11 6l5-3 5 3-5 3z" fill="#a2d83e" /><path d="M11 6v5l5 3V9z" fill="#7cbc2c" /><path d="M21 6v5l-5 3V9z" fill="#8cc832" />
            <path d="M3 15l5-3 5 3-5 3z" fill="#20c4a0" /><path d="M3 15v4l5 3v-4z" fill="#12a486" /><path d="M13 15v4l-5 3v-4z" fill="#16b494" />
            <path d="M12 14l5-3 5 3-5 3z" fill="#9ade34" /><path d="M12 14v5l5 3v-5z" fill="#6eb628" /><path d="M22 14v5l-5 3v-5z" fill="#82c42c" />
          </svg>
        </div>
        <div className="h-[36px] mt-[1px] flex items-center shrink-0">
          <svg width="24" height="24" viewBox="0 0 24 24">
            <path d="M4 10l16-5-3 15z" fill="#1c4f86" />
            <path d="M4 12l8 8-4 2z" fill="#3a9ad0" />
            <path d="M15 16l5 2-1 4-5-2z" fill="#78b838" />
            <circle cx="5" cy="9" r="2.500" fill="#ee5aa8" /><circle cx="13" cy="3" r="2.500" fill="#b05ae0" /><path d="M19 1l1.500 3 3 .5-2 2 .5 3-3-1.500-3 1.500.5-3-2-2 3-.5z" fill="#f2c23c" /><circle cx="21" cy="13" r="2.500" fill="#ee5a88" />
          </svg>
        </div>
        <div className="h-[35px] flex items-center shrink-0">
          <svg width="24" height="24" viewBox="0 0 24 24">
            <path d="M1 10L18 2l5 11-17 8z" fill="#fff" stroke="#c0c8d0" />
            <path d="M4 11l12-6 4 8-12 6z" fill="#8cc8ec" />
            <path d="M7 16l5-4 2 2 3-1 1 1-10 5z" fill="#5aa83a" />
          </svg>
        </div>
        <div className="h-[35px] flex items-center shrink-0">
          <svg width="24" height="24" viewBox="0 0 24 24">
            <circle cx="12" cy="12" r="10" fill="#fff6e6" stroke="#e89a20" strokeWidth="2.800" />
            <path d="M17 7l-7 4 3 3z" fill="#d83a2a" /><path d="M7 17l3-6 3 3z" fill="#2a6ab0" />
            <circle cx="12" cy="3" r="1.800" fill="#3a4a5a" />
          </svg>
        </div>
        <div className="h-[34px] flex items-center shrink-0">
          <svg width="24" height="25" viewBox="0 0 24 25">
            <path d="M9 1h10l4 4v17H9z" fill="#eef6fc" stroke="#3a9ad0" />
            <text x="0" y="20" fontSize="18" fontStyle="italic" fill="#1f3b68" className={SERIF}>fx</text>
          </svg>
        </div>
      </div>
    </div>
  );
}

function StatusBar() {
  const seg = "h-full shrink-0 flex items-center border-r border-[#bdbdbd] text-[12px] leading-none text-[#222]";
  return (
    <div className="flex h-[20px] shrink-0 bg-[#f1f1f1] border-t border-[#dcdcdc]">
      <div className={`${seg} w-[529px] pl-[8px]`}>Лист 1 / 3</div>
      <div className={`${seg} w-[521px] pl-[6px]`}>Базовый</div>
      <div className={`${seg} w-[54px]`} />
      <div className={`${seg} w-[47px] pl-[2px]`}>СТАНД</div>
      <div className={`${seg} w-[16px]`} />
      <div className={`${seg} w-[29px]`} />
      <div className={`${seg} w-[526px] justify-center`}>Сумма=0</div>
      <div className={`${seg} w-[153px] pl-[6px]`}>
        <svg width="12" height="12" viewBox="0 0 12 12" className="shrink-0">
          <circle cx="6" cy="6" r="5" fill="#cfd8e4" stroke="#34527e" />
          <path d="M3.500 6h5" stroke="#34527e" />
        </svg>
        <div className="relative w-[107px] h-px ml-[5px] bg-[#777] shrink-0">
          <div className="absolute left-[48px] top-[-4px] w-[9px] h-[9px] rounded-full bg-[#6a8cb0] border border-[#34527e]" />
        </div>
        <svg width="12" height="12" viewBox="0 0 12 12" className="ml-[4px] shrink-0">
          <circle cx="6" cy="6" r="5" fill="#cfd8e4" stroke="#34527e" />
          <path d="M3.500 6h5M6 3.500v5" stroke="#34527e" />
        </svg>
      </div>
      <div className="flex-1 flex items-center justify-center text-[12px] leading-none text-[#222]">100%</div>
    </div>
  );
}

export default function App() {
  return (
    <div className={`flex flex-col w-[1918px] h-[1036px] overflow-hidden bg-[#f0f0f0] ${UI}`}>
      <TitleBar />
      <MenuBar />
      <Toolbars />
      <div className="flex flex-1 min-h-0 border-t border-[#a8a8a8]">
        <div className="flex flex-col w-[1571px] shrink-0 min-h-0">
          <FormulaBar />
          <div className="flex flex-1 min-h-0">
            <Sheet />
            <VScroll />
          </div>
          <Tabs />
        </div>
        <div className="flex flex-col items-center justify-center w-[6px] shrink-0 bg-[#f0f0f0]">
          <div className="h-[32px] border-l-2 border-dotted border-[#888]" />
        </div>
        <Sidebar />
      </div>
      <StatusBar />
    </div>
  );
}
